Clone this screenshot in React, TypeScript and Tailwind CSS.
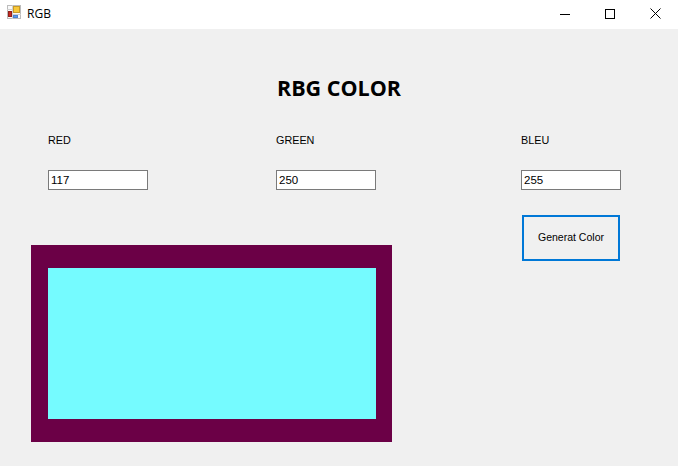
const sans = 'font-["Liberation_Sans",Arial,sans-serif]';

function AppIcon() {
  return (
    <svg width="14" height="14" viewBox="0 0 14 14" shapeRendering="crispEdges">
      <rect x="0.5" y="0.5" width="13" height="13" fill="#f9f9f9" stroke="#bcbcbc" />
      <path d="M0 4.5H6M5.5 0V14M5 9.5H14" stroke="#cfcfcf" />
      <rect x="6.5" y="1.5" width="6" height="6" fill="#f8c838" stroke="#c89a28" />
      <rect x="1.5" y="6.5" width="3" height="5" fill="#c8281e" stroke="#90201a" />
      <rect x="6.5" y="10.5" width="4" height="2" fill="#5b9be8" stroke="#4a80d0" />
    </svg>
  );
}

function Field({ label, value }: { label: string; value: string }) {
  return (
    <div className="flex flex-col w-[100px]">
      <label className="text-[10.8px] leading-[14px] text-black h-[14px]">{label}</label>
      <input
        readOnly
        value={value}
        className="mt-[23px] w-[100px] h-[20px] border border-[#7a7a7a] bg-white px-[2px] text-[11.5px] text-black outline-none"
      />
    </div>
  );
}

export default function App() {
  return (
    <div className={`${sans} w-[678px] h-[466px] bg-[#f0f0f0] overflow-hidden flex flex-col`}>
      {/* Title bar */}
      <div className="h-[29px] bg-white flex items-center shrink-0">
        <div className="ml-[7px] mr-[6px] mb-[5px]">
          <AppIcon />
        </div>
        <span className="text-[12px] text-black mb-[2px] font-['Open_Sans',sans-serif]">RGB</span>
        <div className="ml-auto flex h-full">
          <button className="w-[46px] h-[27px] flex items-center justify-center">
            <svg width="10" height="10" viewBox="0 0 10 10" shapeRendering="crispEdges">
              <path d="M0 5.5H10" stroke="#000" />
            </svg>
          </button>
          <button className="w-[44px] h-[27px] flex items-center justify-center">
            <svg width="10" height="10" viewBox="0 0 10 10" shapeRendering="crispEdges">
              <rect x="0.5" y="0.5" width="9" height="9" fill="none" stroke="#000" />
            </svg>
          </button>
          <button className="w-[46px] h-[27px] flex items-center justify-center">
            <svg width="11" height="11" viewBox="0 0 11 11">
              <path d="M0.5 0.5L10.5 10.5M10.5 0.5L0.5 10.5" stroke="#000" strokeWidth="1" />
            </svg>
          </button>
        </div>
      </div>

      {/* Heading */}
      <h1 className="mt-[43px] h-[32px] text-center text-[21.5px] leading-[32px] font-bold text-black font-['Open_Sans',sans-serif]">
        RBG COLOR
      </h1>

      {/* Form */}
      <div className="mt-[29px] flex">
        <div className="ml-[31px] w-[361px] flex flex-col">
          <div className="ml-[17px] flex gap-[128px]">
            <Field label="RED" value="117" />
            <Field label="GREEN" value="250" />
          </div>
          {/* Colour preview */}
          <div className="mt-[55px] h-[197px] bg-[#6b0046] pl-[17px] pr-[16px] pt-[23px] pb-[23px]">
            <div className="h-[151px] bg-[#75fbff]" />
          </div>
        </div>
        <div className="ml-[129px] flex flex-col">
          <Field label="BLEU" value="255" />
          <button className="mt-[25px] ml-[1px] w-[98px] h-[46px] border-2 border-[#0078d7] bg-[#f0f0f0] text-[10.5px] text-black">
            Generat Color
          </button>
        </div>
      </div>
    </div>
  );
}
